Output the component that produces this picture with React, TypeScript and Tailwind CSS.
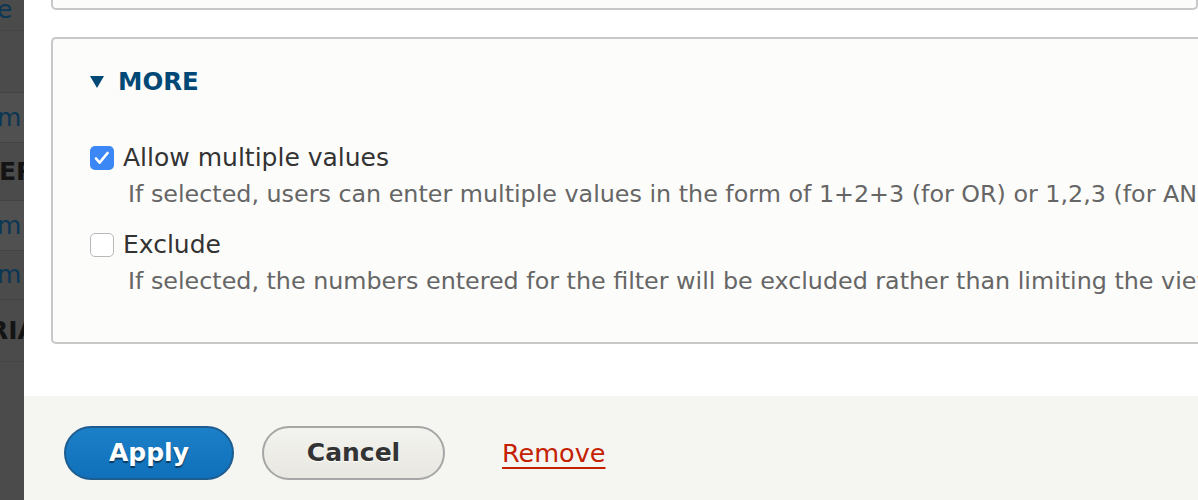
import React from "react";

const font = { fontFamily: '"DejaVu Sans", "Lucida Grande", Verdana, sans-serif' };

function Checkbox({ checked }: { checked: boolean }) {
  if (checked) {
    return (
      <span className="flex h-[24px] w-[24px] shrink-0 items-center justify-center rounded-[5px] bg-[#3b87f5]">
        <svg width="24" height="24" viewBox="0 0 24 24" fill="none">
          <path d="M6 12.5l3.6 4.2L17.6 7" stroke="#fff" strokeWidth="2.6" strokeLinecap="round" strokeLinejoin="round" />
        </svg>
      </span>
    );
  }
  return <span className="block h-[24px] w-[24px] shrink-0 rounded-[5px] border border-[#b8b8b8] bg-white" />;
}

function Option({ label, description, checked }: { label: string; description: string; checked: boolean }) {
  return (
    <div className="flex flex-col">
      <div className="flex items-center gap-[9px]">
        <Checkbox checked={checked} />
        <span className="whitespace-nowrap text-[25px] leading-[30px] text-[#333]">{label}</span>
      </div>
      <p className="ml-[38px] mt-[6px] whitespace-nowrap text-[23.8px] leading-[30px] text-[#666]">{description}</p>
    </div>
  );
}

const sideRows = [
  { text: "e", h: 31, bold: false, bg: "bg-[#4b4b4b]", ml: "ml-[-3px] mt-[-10px]" },
  { text: "", h: 62, bold: false, bg: "bg-[#4b4b4b]", ml: "" },
  { text: "m", h: 50, bold: false, bg: "bg-[#505050]", ml: "ml-[-3px]" },
  { text: "ER", h: 58, bold: true, bg: "bg-[#4b4b4b]", ml: "ml-[-1px]" },
  { text: "m", h: 50, bold: false, bg: "bg-[#505050]", ml: "ml-[-3px]" },
  { text: "m", h: 49, bold: false, bg: "bg-[#4b4b4b]", ml: "ml-[-3px]" },
  { text: "RIA", h: 62, bold: true, bg: "bg-[#4b4b4b]", ml: "ml-[-11px]" },
];

export default function App() {
  return (
    <div className="flex h-[500px] w-[1198px] overflow-hidden bg-white" style={font}>
      <div className="flex w-[24px] shrink-0 flex-col overflow-hidden bg-[#4b4b4b]">
        {sideRows.map((r, i) => (
          <div
            key={i}
            className={`flex shrink-0 items-center overflow-hidden border-b border-[#444] ${r.bg}`}
            style={{ height: r.h }}
          >
            <span
              className={`shrink-0 whitespace-nowrap text-[25px] ${r.ml} ${r.bold ? "font-bold text-[#141414]" : "text-[#0b3654]"}`}
            >
              {r.text}
            </span>
          </div>
        ))}
      </div>

      <div className="flex min-w-0 flex-1 flex-col">
        <div className="flex-1 pl-[27px]">
          <div className="-mt-[20px] h-[30px] rounded-b-[5px] border-2 border-t-0 border-[#c8c8c8] bg-[#fcfcfa]" />
          <div className="mt-[27px] h-[307px] rounded-l-[5px] border-2 border-r-0 border-[#c8c8c8] bg-[#fcfcfa] pl-[37px] pt-[28px]">
            <div className="flex items-center gap-[14px] text-[#004875]">
              <svg width="14" height="12" viewBox="0 0 14 12">
                <polygon points="0,0 14,0 7,12" fill="#004875" />
              </svg>
              <span className="text-[24.5px] font-bold leading-[30px]">MORE</span>
            </div>
            <div className="mt-[46px] flex flex-col gap-[21px]">
              <Option
                checked
                label="Allow multiple values"
                description="If selected, users can enter multiple values in the form of 1+2+3 (for OR) or 1,2,3 (for AND)."
              />
              <Option
                checked={false}
                label="Exclude"
                description="If selected, the numbers entered for the filter will be excluded rather than limiting the view."
              />
            </div>
          </div>
        </div>

        <div className="flex h-[104px] shrink-0 items-center gap-[28px] bg-[#f5f5f2] pl-[40px] pt-[10px]">
          <button className="h-[54px] w-[170px] rounded-full border-2 border-[#1d5c8f] bg-gradient-to-b from-[#1b80c7] to-[#1070bb] text-[25px] font-bold text-white [text-shadow:0_2px_1px_#0c3a5f]">
            Apply
          </button>
          <button className="h-[54px] w-[183px] rounded-full border-2 border-[#a6a6a6] bg-gradient-to-b from-[#f3f3ef] to-[#e8e7e1] text-[25px] font-bold text-[#333] [text-shadow:0_1px_0_#fff]">
            Cancel
          </button>
          <a className="ml-[29px] text-[25.5px] text-[#c42100] underline decoration-2 underline-offset-[5px]">Remove</a>
        </div>
      </div>
    </div>
  );
}
